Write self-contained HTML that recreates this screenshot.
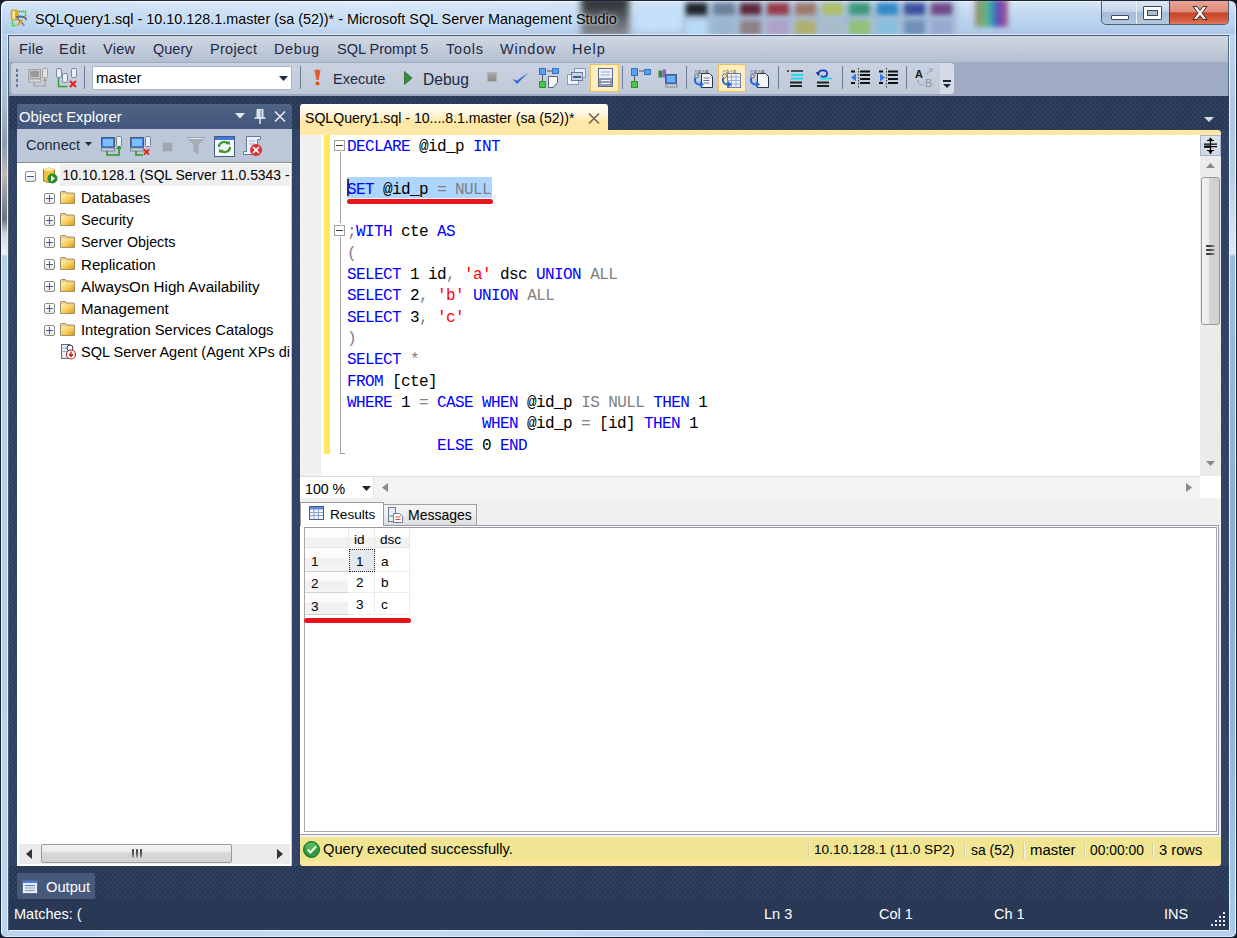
<!DOCTYPE html>
<html><head><meta charset="utf-8"><style>
*{box-sizing:border-box;margin:0;padding:0}
html,body{width:1237px;height:938px;overflow:hidden;background:#141c28}
body{position:relative;font-family:"Liberation Sans",sans-serif;font-size:14.5px;color:#000}
.a{position:absolute}
.t{position:absolute;white-space:pre;line-height:1}
svg{position:absolute;overflow:visible}
#frame{left:0;top:0;width:1237px;height:938px;background:linear-gradient(180deg,rgba(255,255,255,0.45) 0px,rgba(255,255,255,0.15) 14px,rgba(255,255,255,0) 26px,rgba(0,20,60,0.06) 34px,rgba(0,0,0,0) 40px),linear-gradient(90deg,#b9d3ef 0%,#c4dbf3 30%,#b6d0ee 60%,#b4d0ee 100%);border:1px solid #1b2434;border-radius:7px 7px 6px 6px;overflow:hidden;box-shadow:inset 1px 1px 0 rgba(255,255,255,0.8),inset -1px -1px 0 rgba(255,255,255,0.5)}
#glass{left:1px;top:1px;width:1235px;height:34px;overflow:hidden}
#glass .sq{position:absolute;filter:blur(2.5px)}
#client{left:8px;top:35px;width:1222px;height:896px;border-left:1px solid #4a5a70;border-top:1px solid #4a5a70;border-right:1px solid #e8f1fb;border-bottom:1px solid #e8f1fb;background:#293955}
.code{position:absolute;left:347px;font-family:"Liberation Mono",monospace;font-size:16px;letter-spacing:-0.6px;white-space:pre;line-height:1}
.kw{color:#0000ff}.gr{color:#808080}.st{color:#ff0000}
.tb{color:#1e2a44}
.sep{position:absolute;width:1px;background:#6f7c92}
</style></head><body>
<div id="frame" class="a"></div>
<div id="glass" class="a">
<div class="sq" style="left:682px;top:2px;width:274px;height:32px;filter:blur(3px);background:#a6bed8"></div>
<div class="sq" style="left:580px;top:-4px;width:48px;height:40px;filter:blur(3px);background:linear-gradient(180deg,#25282c 0%,#4a4e54 40%,#74787e 75%,#8a9098 100%)"></div>
<div class="sq" style="left:636px;top:4px;width:44px;height:26px;filter:blur(3px);background:#c4e0f8"></div>
<div class="sq" style="left:685px;top:2px;width:21px;height:12px;background:#1e2328"></div>
<div class="sq" style="left:712px;top:2px;width:22px;height:12px;background:#6c8098"></div>
<div class="sq" style="left:739px;top:2px;width:21px;height:12px;background:#5e2838"></div>
<div class="sq" style="left:766px;top:2px;width:22px;height:12px;background:#983848"></div>
<div class="sq" style="left:794px;top:2px;width:21px;height:12px;background:#a07868"></div>
<div class="sq" style="left:821px;top:2px;width:21px;height:12px;background:#b0c068"></div>
<div class="sq" style="left:848px;top:2px;width:21px;height:12px;background:#3e9878"></div>
<div class="sq" style="left:876px;top:2px;width:21px;height:12px;background:#3088c8"></div>
<div class="sq" style="left:903px;top:2px;width:21px;height:12px;background:#3a50a0"></div>
<div class="sq" style="left:930px;top:2px;width:21px;height:12px;background:#704888"></div>
<div class="sq" style="left:685px;top:19px;width:21px;height:15px;background:#badcf8"></div>
<div class="sq" style="left:712px;top:19px;width:22px;height:15px;background:#98b4d0"></div>
<div class="sq" style="left:739px;top:19px;width:21px;height:15px;background:#908088"></div>
<div class="sq" style="left:766px;top:19px;width:22px;height:15px;background:#b0a0c8"></div>
<div class="sq" style="left:794px;top:19px;width:21px;height:15px;background:#b0b070"></div>
<div class="sq" style="left:821px;top:19px;width:21px;height:15px;background:#a8bcc8"></div>
<div class="sq" style="left:848px;top:19px;width:21px;height:15px;background:#90c078"></div>
<div class="sq" style="left:876px;top:19px;width:21px;height:15px;background:#88bee0"></div>
<div class="sq" style="left:903px;top:19px;width:21px;height:15px;background:#7090b8"></div>
<div class="sq" style="left:930px;top:19px;width:21px;height:15px;background:#98a8d0"></div>
<div class="sq" style="left:974px;top:-2px;width:33px;height:28px;background:linear-gradient(90deg,#a08870 0%,#70b070 25%,#40b0a8 45%,#4060c0 65%,#9040a0 82%,#a07090 100%)"></div>
</div>
<svg style="left:8px;top:6px" width="24" height="24" viewBox="0 0 24 24">
<rect x="3.2" y="4" width="6.8" height="9.8" rx="1.2" fill="#e8b020" stroke="#b88a20" stroke-width="0.6"/><rect x="4.5" y="5" width="2.4" height="8" fill="#fae8a0"/>
<g fill="#3cc83c"><circle cx="11.5" cy="5.5" r="0.9"/><circle cx="13.5" cy="5.5" r="0.9"/><circle cx="15.5" cy="5.5" r="0.9"/><circle cx="17.5" cy="5.5" r="0.9"/><circle cx="17.5" cy="7.5" r="0.9"/><circle cx="17.5" cy="9.5" r="0.9"/>
<circle cx="4.5" cy="15.5" r="0.9"/><circle cx="4.5" cy="17.5" r="0.9"/><circle cx="4.5" cy="19.5" r="0.9"/><circle cx="6.5" cy="19.5" r="0.9"/></g>
<path d="M8 11.5Q12 9.5 17 11.5L18.5 14" stroke="#5a6a80" stroke-width="1.8" fill="none"/>
<path d="M10 13l6 6.5" stroke="#2a3a50" stroke-width="1.8" stroke-dasharray="1 1"/>
<path d="M9 19.5l5.5-5.5" stroke="#e0a010" stroke-width="2"/></svg>
<div class="t" style="left:35px;top:12px;font-size:14.4px;text-shadow:0 0 6px rgba(230,240,250,0.9),0 0 3px rgba(230,240,250,0.9)">SQLQuery1.sql - 10.10.128.1.master (sa (52))* - Microsoft SQL Server Management Studio</div>
<div class="a" style="left:1101px;top:1px;width:128px;height:24px;border:1px solid #4f5d73;border-top:none;border-radius:0 0 5px 5px;overflow:hidden;background:linear-gradient(180deg,#dbe7f4 0%,#c5d5e8 45%,#a7bcd6 50%,#b3c7de 100%)">
<div class="a" style="left:34px;top:0;width:1px;height:24px;background:#e8f0f8"></div>
<div class="a" style="left:67px;top:0;width:60px;height:24px;background:linear-gradient(180deg,#eaa597 0%,#e08a78 45%,#c8452b 50%,#d45a3c 80%,#e2876a 100%);border-left:1px solid #8a2a1a"></div></div>
<div class="a" style="left:1111px;top:15px;width:18px;height:5px;background:#fff;border:1px solid #3e4a5c;border-radius:1px"></div>
<div class="a" style="left:1143px;top:6px;width:19px;height:14px;border:1px solid #3e4a5c;border-radius:1px;background:#fff"></div>
<div class="a" style="left:1147px;top:10px;width:11px;height:6px;border:1px solid #3e4a5c;background:#a9bdd6"></div>
<svg style="left:1190px;top:5px" width="20" height="16" viewBox="0 0 20 16"><path d="M3 1.5h4l3 4 3-4h4l-5 6.5 5 6.5h-4l-3-4-3 4H3l5-6.5z" fill="#f2f2f2" stroke="#3e2a2a" stroke-width="1"/></svg>
<div class="a" style="left:1230px;top:34px;width:5px;height:897px;background:linear-gradient(180deg,#bcd6f0 0px,#b0c8e4 70px,#b4cce6 136px,#dde8f4 216px,#dde8f4 220px,#9cbce0 222px,#8fb0d5 480px,#94b5da 700px,#a8c8ec 897px)"></div>
<div class="a" style="left:2px;top:34px;width:5px;height:897px;background:linear-gradient(180deg,#b8d2ee 0px,#a8bcd4 70px,#8c9cb0 110px,#c0b8bc 140px,#6a727c 185px,#d0d8e0 200px,#eef2f6 220px,#b0d0f0 222px,#b4d2f0 500px,#b8d4f0 897px)"></div>
<div class="a" style="left:1235px;top:8px;width:1px;height:924px;background:rgba(240,248,255,0.8)"></div>
<div id="client" class="a"></div>
<div class="a" style="left:7px;top:34px;width:1px;height:897px;background:rgba(240,248,255,0.75)"></div>
<div class="a" style="left:7px;top:34px;width:1223px;height:1px;background:rgba(240,248,255,0.75)"></div>
<div class="a" style="left:9px;top:96px;width:1220px;height:803px;background-image:radial-gradient(circle at 1.25px 1.25px,rgba(70,95,135,0.55) 0,rgba(70,95,135,0) 1.3px),radial-gradient(circle at 3.75px 3.75px,rgba(70,95,135,0.55) 0,rgba(70,95,135,0) 1.3px);background-size:5px 5px"></div>
<div class="a" style="left:9px;top:36px;width:1220px;height:26px;background:linear-gradient(180deg,#d0d7e4 0%,#c3ccdb 50%,#b3bdd0 100%);border-right:1px solid #5a6880"></div>
<div class="t tb" style="left:19px;top:42px;letter-spacing:0.3px">File</div>
<div class="t tb" style="left:59px;top:42px;letter-spacing:0.5px">Edit</div>
<div class="t tb" style="left:103px;top:42px;letter-spacing:0.3px">View</div>
<div class="t tb" style="left:153px;top:42px;letter-spacing:0px">Query</div>
<div class="t tb" style="left:210px;top:42px;letter-spacing:0.3px">Project</div>
<div class="t tb" style="left:274px;top:42px;letter-spacing:0.6px">Debug</div>
<div class="t tb" style="left:337px;top:42px;letter-spacing:0px">SQL Prompt 5</div>
<div class="t tb" style="left:446px;top:42px;letter-spacing:0.8px">Tools</div>
<div class="t tb" style="left:500px;top:42px;letter-spacing:0.8px">Window</div>
<div class="t tb" style="left:572px;top:42px;letter-spacing:1px">Help</div>
<div class="a" style="left:9px;top:62px;width:1220px;height:34px;background:#9eabc2;border-right:1px solid #5a6880"></div>
<div class="a" style="left:11px;top:63px;width:943px;height:31px;border-radius:4px;background:linear-gradient(180deg,#c9d2e0 0%,#bfc9d9 100%)"></div>
<div class="a" style="left:940px;top:63px;width:14px;height:31px;border-radius:0 4px 4px 0;background:#d5dbe7"></div>
<div class="a" style="left:16px;top:69px;width:2px;height:3px;background:#6a7890"></div>
<div class="a" style="left:16px;top:74px;width:2px;height:3px;background:#6a7890"></div>
<div class="a" style="left:16px;top:79px;width:2px;height:3px;background:#6a7890"></div>
<div class="a" style="left:16px;top:84px;width:2px;height:3px;background:#6a7890"></div>
<svg style="left:28px;top:68px" width="21" height="20" viewBox="0 0 21 20">
<rect x="0.5" y="1.5" width="12" height="9" fill="#c8c8c8" stroke="#a0a0a0"/><rect x="2" y="3" width="9" height="6" fill="#9a9a9a"/>
<rect x="0.5" y="11" width="12" height="3" fill="#d8d8d8" stroke="#a8a8a8"/>
<rect x="14.5" y="0.5" width="5" height="9" rx="1" fill="#e0e0e0" stroke="#a0a0a0"/>
<path d="M6 14v4h11v-6" stroke="#a0a0a0" stroke-width="1.2" fill="none"/><path d="M14.5 13l2.5-3 2.5 3z" fill="#a0a0a0"/></svg>
<svg style="left:56px;top:68px" width="22" height="21" viewBox="0 0 22 21">
<rect x="0.5" y="0.5" width="5" height="9" rx="1.5" fill="#eef2f8" stroke="#7a8aa0"/><rect x="6.5" y="5.5" width="5" height="9" rx="1.5" fill="#eef2f8" stroke="#7a8aa0"/>
<rect x="15.5" y="0.5" width="5" height="9" rx="1.5" fill="#eef2f8" stroke="#7a8aa0"/>
<path d="M2.5 10v8.5h9" stroke="#3aa03a" stroke-width="1.6" fill="none"/>
<path d="M14 13l6 6M20 13l-6 6" stroke="#e82020" stroke-width="2"/></svg>
<div class="sep" style="left:84px;top:66px;height:23px"></div>
<div class="a" style="left:92px;top:66px;width:200px;height:24px;background:#fff;border:1px solid #a7b3c7"></div>
<div class="t" style="left:96px;top:71px;font-size:14.9px">master</div>
<svg style="left:279px;top:76px" width="9" height="5" viewBox="0 0 9 5"><path d="M0 0h9L4.5 5z" fill="#1a2a44"/></svg>
<div class="sep" style="left:300px;top:66px;height:23px"></div>
<svg style="left:313px;top:69px" width="9" height="17" viewBox="0 0 9 17">
<path d="M1.5 1.5Q4.5-0.5 7.5 1.5L5.5 11h-2z" fill="#e85a2a"/><circle cx="4.5" cy="14.5" r="2" fill="#e24a20"/></svg>
<div class="t tb" style="left:333px;top:72px">Execute</div>
<svg style="left:404px;top:71px" width="9" height="14" viewBox="0 0 9 14"><path d="M0.5 0.5L8 7L0.5 13.5z" fill="#3a8a3a" stroke="#2a6a2a" stroke-width="0.8"/></svg>
<div class="t tb" style="left:423px;top:72px;font-size:15.6px">Debug</div>
<div class="a" style="left:487px;top:72px;width:10px;height:10px;background:linear-gradient(180deg,#a8a8a8,#8a8a8a);border:1px solid #b4b4b4"></div>
<svg style="left:512px;top:72px" width="17" height="13" viewBox="0 0 17 13"><path d="M0.5 7L5 12L16.5 0.5L5 8.5z" fill="#3d6ad0"/></svg>
<svg style="left:539px;top:68px" width="20" height="20" viewBox="0 0 20 20">
<rect x="0.5" y="0.5" width="6" height="6" fill="#5aa0e8" stroke="#3a70c0"/><rect x="13.5" y="0.5" width="6" height="5" fill="#5aa0e8" stroke="#3a70c0"/>
<path d="M8 3h5M3.5 7v6" stroke="#556" stroke-width="1"/>
<rect x="0.5" y="13.5" width="6" height="6" fill="#48c848" stroke="#2a9a2a"/>
<path d="M9.5 8.5h9v6l-4 5h-5z" fill="#f4f6fa" stroke="#5a6478"/></svg>
<svg style="left:567px;top:68px" width="20" height="19" viewBox="0 0 20 19">
<rect x="7.5" y="0.5" width="11" height="9" fill="#e8eef8" stroke="#8a9ab8"/><rect x="0.5" y="6.5" width="11" height="10" fill="#eef2f8" stroke="#8a9ab8"/>
<rect x="4.5" y="4.5" width="11" height="8" fill="#c4d4ec" stroke="#6a7a98"/><rect x="6" y="8" width="8" height="2" fill="#4a5a78"/></svg>
<div class="a" style="left:590px;top:64px;width:29px;height:28px;background:#ffedbd;border:1px solid #e5c365"></div>
<svg style="left:598px;top:68px" width="15" height="19" viewBox="0 0 15 19">
<rect x="0.5" y="0.5" width="14" height="18" fill="#eef2f8" stroke="#5a6a88"/><path d="M3 4h9M3 7h9" stroke="#9aaacc"/>
<rect x="1" y="10" width="13" height="8" fill="#8a9ab8"/><path d="M3 12.5h9M3 15.5h9" stroke="#f4f6fa"/></svg>
<div class="sep" style="left:622px;top:66px;height:23px"></div>
<svg style="left:631px;top:68px" width="20" height="20" viewBox="0 0 20 20">
<rect x="0.5" y="0.5" width="6" height="7" fill="#5aa0e8" stroke="#3a70c0"/><rect x="13.5" y="1.5" width="6" height="5" fill="#5aa0e8" stroke="#3a70c0"/>
<path d="M8 3h5M3.5 8v6" stroke="#556" stroke-width="1"/><rect x="0.5" y="13.5" width="6" height="6" fill="#48c848" stroke="#2a9a2a"/></svg>
<svg style="left:658px;top:68px" width="20" height="20" viewBox="0 0 20 20">
<rect x="0.5" y="2.5" width="4" height="7" fill="#3a8a3a"/><rect x="4.5" y="1.5" width="4" height="8" fill="#8a6ac0"/><rect x="8.5" y="1.5" width="3" height="8" fill="#d8d8e8"/>
<rect x="7.5" y="6.5" width="11" height="9" fill="#3a7ae0" stroke="#4a5a78"/><rect x="9" y="8" width="8" height="6" fill="#6ab0f8"/><rect x="8" y="16" width="11" height="3" fill="#c8d0dc" stroke="#7a8698"/></svg>
<div class="sep" style="left:686px;top:66px;height:23px"></div>
<svg style="left:693px;top:68px" width="21" height="20" viewBox="0 0 21 20">
<text x="1" y="6" font-family="Liberation Mono" font-size="6" fill="#333">!0!0</text>
<circle cx="3.5" cy="8" r="2" fill="none" stroke="#555" stroke-width="0.8"/><path d="M8.5 5.5h8l3 3v11h-11z" fill="#f4f6fa" stroke="#2a3448"/><path d="M10.5 10h6M10.5 12.5h6M10.5 15h6" stroke="#6a7488"/><path d="M2 10Q1 17 8 16.5" stroke="#2a6ad8" stroke-width="2.2" fill="none"/><path d="M7 13l4 3.5-4 3z" fill="#2a6ad8"/></svg>
<div class="a" style="left:718px;top:64px;width:28px;height:28px;background:#ffedbd;border:1px solid #e5c365"></div>
<svg style="left:721px;top:68px" width="21" height="20" viewBox="0 0 21 20">
<text x="1" y="6" font-family="Liberation Mono" font-size="6" fill="#333">!0!0</text>
<circle cx="3.5" cy="8" r="2" fill="none" stroke="#555" stroke-width="0.8"/><rect x="6.5" y="5.5" width="13" height="14" fill="#f0f4fa" stroke="#6a7a98"/><path d="M6.5 9h13M6.5 12.5h13M6.5 16h13M10.5 5.5v14M15 5.5v14" stroke="#9ab0d0"/><path d="M2 10Q1 17 8 16.5" stroke="#2a6ad8" stroke-width="2.2" fill="none"/><path d="M7 13l4 3.5-4 3z" fill="#2a6ad8"/></svg>
<svg style="left:749px;top:68px" width="21" height="20" viewBox="0 0 21 20">
<text x="1" y="6" font-family="Liberation Mono" font-size="6" fill="#333">!0!0</text>
<circle cx="3.5" cy="8" r="2" fill="none" stroke="#555" stroke-width="0.8"/><path d="M8.5 5.5h8l3 3v11h-11z" fill="#f4f6fa" stroke="#2a3448"/><path d="M2 10Q1 17 8 16.5" stroke="#2a6ad8" stroke-width="2.2" fill="none"/><path d="M7 13l4 3.5-4 3z" fill="#2a6ad8"/></svg>
<div class="sep" style="left:778px;top:66px;height:23px"></div>
<svg style="left:786px;top:69px" width="19" height="19" viewBox="0 0 19 19">
<path d="M1 2h2M5 2h12" stroke="#222" stroke-width="1.6"/><path d="M5 6h12M5 9.5h12" stroke="#20d8e8" stroke-width="1.8"/><path d="M4 13.5h12M4 17h12" stroke="#222" stroke-width="1.8"/></svg>
<svg style="left:815px;top:69px" width="18" height="19" viewBox="0 0 18 19">
<path d="M3 6Q3 1 9 1.5Q13 2 12 6Q10 9 6 7" stroke="#1a3ab8" stroke-width="1.8" fill="none"/><path d="M0.5 3.5l4-1 0 5z" fill="#1a3ab8"/>
<path d="M5 9.5h12" stroke="#20d8e8" stroke-width="1.8"/><path d="M2 13.5h12M2 17h12" stroke="#222" stroke-width="1.8"/></svg>
<div class="sep" style="left:842px;top:66px;height:23px"></div>
<svg style="left:850px;top:68px" width="21" height="20" viewBox="0 0 21 20">
<path d="M8.5 0v20" stroke="#333" stroke-width="1" stroke-dasharray="1.5 1.5"/>
<path d="M1 3.5h4M10 3.5h10M10 7h10M10 11h10M1 15h4M10 15h10" stroke="#111" stroke-width="2"/><path d="M1 9.5l5-4v8z" fill="#3a7ae8"/></svg>
<svg style="left:878px;top:68px" width="21" height="20" viewBox="0 0 21 20">
<path d="M8.5 0v20" stroke="#333" stroke-width="1" stroke-dasharray="1.5 1.5"/>
<path d="M1 3.5h4M10 3.5h10M10 7h10M10 11h10M1 15h4M10 15h10" stroke="#111" stroke-width="2"/><path d="M7 9.5l-5-4v8z" fill="#3a7ae8"/></svg>
<div class="sep" style="left:906px;top:66px;height:23px"></div>
<svg style="left:915px;top:68px" width="20" height="20" viewBox="0 0 20 20">
<text x="0" y="10" font-family="Liberation Sans" font-weight="bold" font-size="11" fill="#222">A</text>
<text x="10" y="19" font-family="Liberation Sans" font-size="11" fill="#8a94a4">B</text>
<path d="M12 6l5-5M14 1h3v3" stroke="#7a8aa8" stroke-width="1" fill="none" stroke-dasharray="1.5 1"/>
<path d="M3 12q0 5 6 5" stroke="#7a8aa8" stroke-width="1" fill="none" stroke-dasharray="1.5 1"/></svg>
<div class="a" style="left:943px;top:80px;width:8px;height:2px;background:#1a2438"></div>
<svg style="left:943px;top:84px" width="8" height="4" viewBox="0 0 8 4"><path d="M0 0h8L4 4z" fill="#1a2438"/></svg>
<div class="a" style="left:9px;top:129px;width:8px;height:737px;background-color:#33466a;background-image:radial-gradient(circle at 1.25px 1.25px,rgba(35,50,78,0.8) 0,rgba(35,50,78,0) 1.3px),radial-gradient(circle at 3.75px 3.75px,rgba(35,50,78,0.8) 0,rgba(35,50,78,0) 1.3px);background-size:5px 5px"></div>
<div class="a" style="left:292px;top:129px;width:8px;height:737px;background-color:#33466a;background-image:radial-gradient(circle at 1.25px 1.25px,rgba(35,50,78,0.8) 0,rgba(35,50,78,0) 1.3px),radial-gradient(circle at 3.75px 3.75px,rgba(35,50,78,0.8) 0,rgba(35,50,78,0) 1.3px);background-size:5px 5px"></div>
<div class="a" style="left:1221px;top:129px;width:8px;height:737px;background-color:#33466a;background-image:radial-gradient(circle at 1.25px 1.25px,rgba(35,50,78,0.8) 0,rgba(35,50,78,0) 1.3px),radial-gradient(circle at 3.75px 3.75px,rgba(35,50,78,0.8) 0,rgba(35,50,78,0) 1.3px);background-size:5px 5px"></div>
<div class="a" style="left:17px;top:104px;width:275px;height:25px;border-radius:3px 3px 0 0;background:linear-gradient(180deg,#506486 0%,#42567b 100%)"></div>
<div class="t" style="left:19px;top:110px;color:#fff;font-size:14.9px">Object Explorer</div>
<svg style="left:235px;top:113px" width="10" height="6" viewBox="0 0 10 6"><path d="M0 0h10L5 5.5z" fill="#e6ebf2"/></svg>
<svg style="left:254px;top:109px" width="12" height="15" viewBox="0 0 12 15">
<path d="M3 0.5h6v8H3z" fill="#dfe5ee" stroke="#dfe5ee"/><path d="M7 1v7" stroke="#8898b4" stroke-width="1.5"/><path d="M0.5 9h11" stroke="#e6ebf2" stroke-width="1.6"/><path d="M6 9v6" stroke="#e6ebf2" stroke-width="1.5"/></svg>
<svg style="left:274px;top:111px" width="12" height="11" viewBox="0 0 12 11"><path d="M1 0.5l10 10M11 0.5l-10 10" stroke="#e6ebf2" stroke-width="1.6"/></svg>
<div class="a" style="left:17px;top:129px;width:275px;height:34px;background:#bcc7d8;border-bottom:1px solid #8a8f9a"></div>
<div class="t tb" style="left:26px;top:138px">Connect</div>
<svg style="left:85px;top:142px" width="7" height="4" viewBox="0 0 7 4"><path d="M0 0h7L3.5 4z" fill="#1a2a44"/></svg>
<svg style="left:101px;top:136px" width="22" height="20" viewBox="0 0 22 20">
<rect x="0.5" y="1.5" width="13" height="10" fill="#3a7ae0" stroke="#4a5a78"/><rect x="2" y="3" width="10" height="7" fill="#7ac0ff"/>
<rect x="0.5" y="12" width="13" height="3" fill="#c8d0dc" stroke="#7a8698"/><rect x="15.5" y="0.5" width="5" height="10" rx="1" fill="#e8eef6" stroke="#7a8698"/>
<path d="M6 15v4h12v-7" stroke="#2a9a2a" stroke-width="1.6" fill="none"/><path d="M15 13l3-3.5 3 3.5z" fill="#2a9a2a"/></svg>
<svg style="left:130px;top:136px" width="21" height="20" viewBox="0 0 21 20">
<rect x="0.5" y="1.5" width="13" height="10" fill="#3a7ae0" stroke="#4a5a78"/><rect x="2" y="3" width="10" height="7" fill="#7ac0ff"/>
<rect x="0.5" y="12" width="13" height="3" fill="#c8d0dc" stroke="#7a8698"/><rect x="15.5" y="0.5" width="5" height="10" rx="1" fill="#e8eef6" stroke="#7a8698"/>
<path d="M6 15v4h7" stroke="#2a9a2a" stroke-width="1.6" fill="none"/><path d="M14 13.5l5 5M19 13.5l-5 5" stroke="#e82020" stroke-width="1.8"/></svg>
<div class="a" style="left:162px;top:142px;width:11px;height:10px;background:#a0a6b0;border:1px solid #b6bcc6"></div>
<svg style="left:187px;top:137px" width="18" height="17" viewBox="0 0 18 17"><path d="M0.5 0.5h17L11 7.5v9l-4-2.5V7.5z" fill="#a8aeb8" stroke="#a0a6b0"/><path d="M2 1.5h14" stroke="#e0e4ea"/></svg>
<svg style="left:214px;top:136px" width="21" height="21" viewBox="0 0 21 21">
<rect x="0.5" y="0.5" width="20" height="20" fill="#f4f8fc" stroke="#4a5a78"/><rect x="1" y="1" width="19" height="3" fill="#3a7ae0"/>
<path d="M5 11a5 5 0 0 1 9-3" stroke="#3a9a2a" stroke-width="2.2" fill="none"/><path d="M16 11a5 5 0 0 1-9 3" stroke="#3a9a2a" stroke-width="2.2" fill="none"/>
<path d="M12 5.5h4v4z" fill="#3a9a2a"/><path d="M9 16.5H5v-4z" fill="#3a9a2a"/></svg>
<svg style="left:242px;top:135px" width="21" height="22" viewBox="0 0 21 22">
<path d="M4.5 1.5h14v3h-3v15H1.5v-3h3z" fill="#eef2f8" stroke="#6a7a98"/><path d="M7 6h6M7 9h6" stroke="#9ab0d8"/>
<circle cx="14" cy="15" r="6" fill="#d8343a"/><path d="M11 12l6 6M17 12l-6 6" stroke="#fff" stroke-width="1.6"/></svg>
<div class="a" style="left:17px;top:163px;width:275px;height:703px;background:#fff;border-right:1px solid #c4c8d0"></div>
<div class="a" style="left:60px;top:164px;width:230px;height:22px;background:#efefef"></div>
<div class="a" style="left:25px;top:171px;width:11px;height:11px;border:1px solid #8e8e8e;border-radius:2px;background:linear-gradient(180deg,#fff 0%,#fafafa 50%,#e4e4e4 100%)"></div><div class="a" style="left:27px;top:176px;width:7px;height:1px;background:#3c5aa0"></div>
<svg style="left:43px;top:167px" width="15" height="17" viewBox="0 0 15 17">
<path d="M0.5 2.5Q6 -0.5 11.5 2.5V14Q6 17 0.5 14z" fill="#f0c040" stroke="#b08020"/><ellipse cx="6" cy="2.5" rx="5" ry="1.8" fill="#fbe7a0"/>
<circle cx="9.5" cy="11.5" r="5" fill="#2a8a2a"/><path d="M8 8.5l4 3-4 3z" fill="#fff"/></svg>
<div class="a" style="left:17px;top:160px;width:273px;height:30px;overflow:hidden"><div class="t" style="left:45.5px;top:9px;font-size:13.9px">10.10.128.1 (SQL Server 11.0.5343 -</div></div>
<div class="a" style="left:44px;top:193px;width:11px;height:11px;border:1px solid #8e8e8e;border-radius:2px;background:linear-gradient(180deg,#fff 0%,#fafafa 50%,#e4e4e4 100%)"></div><div class="a" style="left:46px;top:198px;width:7px;height:1px;background:#3c5aa0"></div><div class="a" style="left:49px;top:195px;width:1px;height:7px;background:#3c5aa0"></div>
<svg style="left:60px;top:191px" width="16" height="13" viewBox="0 0 16 13">
<path d="M0.5 12.5V1.5Q0.5 0.5 1.5 0.5h4l1 1.5h7.5Q14.5 2 14.5 3v9.5z" fill="#eed07a" stroke="#8a7a5a" stroke-width="0.8"/>
<rect x="1" y="3.5" width="13" height="8.6" fill="url(#fg)"/></svg>
<div class="t" style="left:81px;top:191px;font-size:14.5px">Databases</div>
<div class="a" style="left:44px;top:215px;width:11px;height:11px;border:1px solid #8e8e8e;border-radius:2px;background:linear-gradient(180deg,#fff 0%,#fafafa 50%,#e4e4e4 100%)"></div><div class="a" style="left:46px;top:220px;width:7px;height:1px;background:#3c5aa0"></div><div class="a" style="left:49px;top:217px;width:1px;height:7px;background:#3c5aa0"></div>
<svg style="left:60px;top:213px" width="16" height="13" viewBox="0 0 16 13">
<path d="M0.5 12.5V1.5Q0.5 0.5 1.5 0.5h4l1 1.5h7.5Q14.5 2 14.5 3v9.5z" fill="#eed07a" stroke="#8a7a5a" stroke-width="0.8"/>
<rect x="1" y="3.5" width="13" height="8.6" fill="url(#fg)"/></svg>
<div class="t" style="left:81px;top:213px;font-size:14.5px">Security</div>
<div class="a" style="left:44px;top:237px;width:11px;height:11px;border:1px solid #8e8e8e;border-radius:2px;background:linear-gradient(180deg,#fff 0%,#fafafa 50%,#e4e4e4 100%)"></div><div class="a" style="left:46px;top:242px;width:7px;height:1px;background:#3c5aa0"></div><div class="a" style="left:49px;top:239px;width:1px;height:7px;background:#3c5aa0"></div>
<svg style="left:60px;top:235px" width="16" height="13" viewBox="0 0 16 13">
<path d="M0.5 12.5V1.5Q0.5 0.5 1.5 0.5h4l1 1.5h7.5Q14.5 2 14.5 3v9.5z" fill="#eed07a" stroke="#8a7a5a" stroke-width="0.8"/>
<rect x="1" y="3.5" width="13" height="8.6" fill="url(#fg)"/></svg>
<div class="t" style="left:81px;top:235px;font-size:14.28px">Server Objects</div>
<div class="a" style="left:44px;top:259px;width:11px;height:11px;border:1px solid #8e8e8e;border-radius:2px;background:linear-gradient(180deg,#fff 0%,#fafafa 50%,#e4e4e4 100%)"></div><div class="a" style="left:46px;top:264px;width:7px;height:1px;background:#3c5aa0"></div><div class="a" style="left:49px;top:261px;width:1px;height:7px;background:#3c5aa0"></div>
<svg style="left:60px;top:257px" width="16" height="13" viewBox="0 0 16 13">
<path d="M0.5 12.5V1.5Q0.5 0.5 1.5 0.5h4l1 1.5h7.5Q14.5 2 14.5 3v9.5z" fill="#eed07a" stroke="#8a7a5a" stroke-width="0.8"/>
<rect x="1" y="3.5" width="13" height="8.6" fill="url(#fg)"/></svg>
<div class="t" style="left:81px;top:257px;font-size:15.1px">Replication</div>
<div class="a" style="left:44px;top:281px;width:11px;height:11px;border:1px solid #8e8e8e;border-radius:2px;background:linear-gradient(180deg,#fff 0%,#fafafa 50%,#e4e4e4 100%)"></div><div class="a" style="left:46px;top:286px;width:7px;height:1px;background:#3c5aa0"></div><div class="a" style="left:49px;top:283px;width:1px;height:7px;background:#3c5aa0"></div>
<svg style="left:60px;top:279px" width="16" height="13" viewBox="0 0 16 13">
<path d="M0.5 12.5V1.5Q0.5 0.5 1.5 0.5h4l1 1.5h7.5Q14.5 2 14.5 3v9.5z" fill="#eed07a" stroke="#8a7a5a" stroke-width="0.8"/>
<rect x="1" y="3.5" width="13" height="8.6" fill="url(#fg)"/></svg>
<div class="t" style="left:81px;top:279px;font-size:15.2px">AlwaysOn High Availability</div>
<div class="a" style="left:44px;top:303px;width:11px;height:11px;border:1px solid #8e8e8e;border-radius:2px;background:linear-gradient(180deg,#fff 0%,#fafafa 50%,#e4e4e4 100%)"></div><div class="a" style="left:46px;top:308px;width:7px;height:1px;background:#3c5aa0"></div><div class="a" style="left:49px;top:305px;width:1px;height:7px;background:#3c5aa0"></div>
<svg style="left:60px;top:301px" width="16" height="13" viewBox="0 0 16 13">
<path d="M0.5 12.5V1.5Q0.5 0.5 1.5 0.5h4l1 1.5h7.5Q14.5 2 14.5 3v9.5z" fill="#eed07a" stroke="#8a7a5a" stroke-width="0.8"/>
<rect x="1" y="3.5" width="13" height="8.6" fill="url(#fg)"/></svg>
<div class="t" style="left:81px;top:301px;font-size:15.04px">Management</div>
<div class="a" style="left:44px;top:325px;width:11px;height:11px;border:1px solid #8e8e8e;border-radius:2px;background:linear-gradient(180deg,#fff 0%,#fafafa 50%,#e4e4e4 100%)"></div><div class="a" style="left:46px;top:330px;width:7px;height:1px;background:#3c5aa0"></div><div class="a" style="left:49px;top:327px;width:1px;height:7px;background:#3c5aa0"></div>
<svg style="left:60px;top:323px" width="16" height="13" viewBox="0 0 16 13">
<path d="M0.5 12.5V1.5Q0.5 0.5 1.5 0.5h4l1 1.5h7.5Q14.5 2 14.5 3v9.5z" fill="#eed07a" stroke="#8a7a5a" stroke-width="0.8"/>
<rect x="1" y="3.5" width="13" height="8.6" fill="url(#fg)"/></svg>
<div class="t" style="left:81px;top:323px;font-size:14.74px">Integration Services Catalogs</div>
<svg width="0" height="0" style="left:0;top:0"><defs><linearGradient id="fg" x1="0" y1="0" x2="1" y2="1"><stop offset="0" stop-color="#fff2b8"/><stop offset="0.6" stop-color="#f4c850"/><stop offset="1" stop-color="#d89a10"/></linearGradient></defs></svg>
<svg style="left:61px;top:344px" width="16" height="16" viewBox="0 0 16 16">
<rect x="0.5" y="0.5" width="8" height="14" fill="#e8eef8" stroke="#5a6a88"/><path d="M1.5 4h6M1.5 7.5h6" stroke="#9aaac8"/>
<circle cx="9" cy="4" r="3" fill="#fff" stroke="#333"/><circle cx="10" cy="10.5" r="4.5" fill="#fff" stroke="#a83030" stroke-width="1.2"/>
<path d="M10 7.5v4.5M8 10l2 2.5 2-2.5" stroke="#c02020" stroke-width="1.4" fill="none"/></svg>
<div class="t" style="left:81px;top:345px">SQL Server Agent (Agent XPs di</div>
<div class="a" style="left:19px;top:844px;width:271px;height:20px;background:#eaeaea"></div>
<svg style="left:26px;top:849px" width="6" height="10" viewBox="0 0 6 10"><path d="M6 0v10L0 5z" fill="#333"/></svg>
<svg style="left:277px;top:849px" width="6" height="10" viewBox="0 0 6 10"><path d="M0 0v10L6 5z" fill="#333"/></svg>
<div class="a" style="left:41px;top:844px;width:191px;height:19px;border:1px solid #9a9a9a;border-radius:2px;background:linear-gradient(180deg,#f2f2f2 0%,#ececec 40%,#d8d8d8 45%,#d2d2d2 100%)"></div>
<div class="a" style="left:132px;top:849px;width:2px;height:9px;border-radius:1px;background:linear-gradient(180deg,#333,#666 60%,#aaa)"></div>
<div class="a" style="left:136px;top:849px;width:2px;height:9px;border-radius:1px;background:linear-gradient(180deg,#333,#666 60%,#aaa)"></div>
<div class="a" style="left:140px;top:849px;width:2px;height:9px;border-radius:1px;background:linear-gradient(180deg,#333,#666 60%,#aaa)"></div>
<div class="a" style="left:300px;top:104px;width:308px;height:31px;border-radius:3px 3px 0 0;background:linear-gradient(180deg,#fffdf6 0%,#fff5dc 35%,#ffefc0 45%,#ffe8a6 55%,#ffe8a6 100%)"></div>
<div class="t" style="left:305px;top:111px;font-size:14.1px">SQLQuery1.sql - 10....8.1.master (sa (52))*</div>
<svg style="left:588px;top:113px" width="12" height="11" viewBox="0 0 12 11"><path d="M1 0.5l10 10M11 0.5l-10 10" stroke="#6e6650" stroke-width="1.6"/></svg>
<div class="a" style="left:300px;top:130px;width:921px;height:5px;border-radius:0 3px 0 0;background:#ffe8a6"></div>
<svg style="left:1204px;top:117px" width="10" height="5" viewBox="0 0 10 5"><path d="M0 0h10L5 5z" fill="#d8dce4"/></svg>
<div class="a" style="left:300px;top:135px;width:921px;height:341px;background:#fff"></div>
<div class="a" style="left:300px;top:135px;width:21px;height:341px;background:#f0f0f0"></div>
<div class="a" style="left:324px;top:135px;width:6px;height:319px;background:#ffe860"></div>
<div class="a" style="left:334px;top:140px;width:11px;height:11px;border:1px solid #a0a0a0;background:#fff"></div><div class="a" style="left:336px;top:145px;width:7px;height:1px;background:#404040"></div>
<div class="a" style="left:340px;top:152px;width:1px;height:71px;background:#a0a0a0"></div>
<div class="a" style="left:334px;top:225px;width:11px;height:11px;border:1px solid #a0a0a0;background:#fff"></div><div class="a" style="left:336px;top:230px;width:7px;height:1px;background:#404040"></div>
<div class="a" style="left:340px;top:237px;width:1px;height:217px;background:#a0a0a0"></div>
<div class="a" style="left:340px;top:453px;width:5px;height:1px;background:#a0a0a0"></div>
<div class="a" style="left:347px;top:177px;width:145px;height:21px;background:#add6ff"></div>
<div class="a" style="left:347px;top:179px;width:2px;height:17px;background:#333"></div>
<div class="code" style="top:139.00px"><span class="kw">DECLARE</span> @id_p <span class="kw">INT</span></div>
<div class="code" style="top:181.67px"><span class="kw">SET</span> @id_p <span class="gr">=</span> <span class="gr">NULL</span></div>
<div class="code" style="top:224.33px"><span class="gr">;</span><span class="kw">WITH</span> cte <span class="kw">AS</span></div>
<div class="code" style="top:245.67px"><span class="gr">(</span></div>
<div class="code" style="top:267.00px"><span class="kw">SELECT</span> 1 id<span class="gr">,</span> <span class="st">'a'</span> dsc <span class="kw">UNION</span> <span class="gr">ALL</span></div>
<div class="code" style="top:288.33px"><span class="kw">SELECT</span> 2<span class="gr">,</span> <span class="st">'b'</span> <span class="kw">UNION</span> <span class="gr">ALL</span></div>
<div class="code" style="top:309.67px"><span class="kw">SELECT</span> 3<span class="gr">,</span> <span class="st">'c'</span></div>
<div class="code" style="top:331.00px"><span class="gr">)</span></div>
<div class="code" style="top:352.33px"><span class="kw">SELECT</span> <span class="gr">*</span></div>
<div class="code" style="top:373.67px"><span class="kw">FROM</span> [cte]</div>
<div class="code" style="top:395.00px"><span class="kw">WHERE</span> 1 <span class="gr">=</span> <span class="kw">CASE</span> <span class="kw">WHEN</span> @id_p <span class="gr">IS</span> <span class="gr">NULL</span> <span class="kw">THEN</span> 1</div>
<div class="code" style="top:416.33px">               <span class="kw">WHEN</span> @id_p <span class="gr">=</span> [id] <span class="kw">THEN</span> 1</div>
<div class="code" style="top:437.67px">          <span class="kw">ELSE</span> 0 <span class="kw">END</span></div>
<div class="a" style="left:347px;top:199px;width:146px;height:5px;border-radius:3px;background:#e8141c"></div>
<div class="a" style="left:1200px;top:135px;width:21px;height:341px;background:#ebebeb"></div>
<div class="a" style="left:1200px;top:135px;width:21px;height:21px;background:linear-gradient(180deg,#dde3ec,#d0d8e4);border:1px solid #a8b4c8"></div>
<svg style="left:1203px;top:137px" width="15" height="18" viewBox="0 0 15 18">
<path d="M7.5 1v16" stroke="#000" stroke-width="1.3"/><path d="M4 3.5h7M4 13.5h7" stroke="#000" stroke-width="1.2"/>
<path d="M1 7.2h13M1 9.6h13" stroke="#000" stroke-width="1.3"/><path d="M1 9.6h6" stroke="#000" stroke-width="2.2"/>
<path d="M5 3.5l2.5-3 2.5 3z" fill="#000"/><path d="M5 13.5l2.5 3.5 2.5-3.5z" fill="#000"/></svg>
<svg style="left:1206px;top:163px" width="9" height="5" viewBox="0 0 9 5"><path d="M0 5L4.5 0 9 5z" fill="#8a8a8a"/></svg>
<div class="a" style="left:1201px;top:177px;width:19px;height:148px;border:1px solid #9a9a9a;border-radius:3px;background:linear-gradient(90deg,#f2f2f2 0%,#ececec 40%,#d4d4d4 45%,#d0d0d0 100%)"></div>
<div class="a" style="left:1206px;top:245px;width:9px;height:2px;border-radius:1px;background:linear-gradient(90deg,#222,#555 60%,#aaa)"></div>
<div class="a" style="left:1206px;top:249px;width:9px;height:2px;border-radius:1px;background:linear-gradient(90deg,#222,#555 60%,#aaa)"></div>
<div class="a" style="left:1206px;top:253px;width:9px;height:2px;border-radius:1px;background:linear-gradient(90deg,#222,#555 60%,#aaa)"></div>
<svg style="left:1206px;top:461px" width="9" height="5" viewBox="0 0 9 5"><path d="M0 0L4.5 5 9 0z" fill="#8a8a8a"/></svg>
<div class="a" style="left:300px;top:476px;width:900px;height:22px;background:#f3f3f3;border-top:1px solid #dcdcdc"></div>
<div class="a" style="left:1200px;top:476px;width:21px;height:22px;background:#fff"></div>
<div class="a" style="left:300px;top:477px;width:74px;height:21px;background:#fff;border-right:1px solid #e4e4e4"></div>
<div class="t" style="left:305px;top:482px;font-size:14.2px">100 %</div>
<svg style="left:362px;top:486px" width="9" height="5" viewBox="0 0 9 5"><path d="M0 0h9L4.5 5z" fill="#1a2438"/></svg>
<svg style="left:382px;top:483px" width="6" height="9" viewBox="0 0 6 9"><path d="M6 0v9L0 4.5z" fill="#8a8a8a"/></svg>
<svg style="left:1186px;top:483px" width="6" height="9" viewBox="0 0 6 9"><path d="M0 0v9L6 4.5z" fill="#8a8a8a"/></svg>
<div class="a" style="left:300px;top:498px;width:921px;height:339px;background:#f0f0f0"></div>
<div class="a" style="left:383px;top:504px;width:94px;height:22px;border:1px solid #a0a0a0;border-bottom:none;background:linear-gradient(180deg,#f6f6f6 0%,#ececec 50%,#dcdcdc 100%)"></div>
<div class="a" style="left:300px;top:525px;width:919px;height:1px;background:#9a9aa4"></div>
<div class="a" style="left:300px;top:502px;width:84px;height:24px;border:1px solid #9a9aa4;border-bottom:none;background:#fff"></div>
<svg style="left:309px;top:506px" width="15" height="14" viewBox="0 0 15 14">
<rect x="0.5" y="0.5" width="14" height="13" fill="#f4f8fc" stroke="#4a5a78"/><rect x="1" y="1" width="13" height="2.5" fill="#5a8ae0"/>
<path d="M1 6.5h13M1 9.5h13M5 3.5v10M9.5 3.5v10" stroke="#8aa0c8"/></svg>
<div class="t" style="left:330px;top:508px;font-size:13.6px">Results</div>
<svg style="left:388px;top:507px" width="15" height="16" viewBox="0 0 15 16">
<rect x="0.5" y="0.5" width="7" height="14" fill="#e8eef8" stroke="#6a7a98"/><path d="M5.5 6.5h6l3 3v6h-9z" fill="#fff" stroke="#6a7a98"/>
<path d="M7.5 10h5M7.5 12.5h5" stroke="#e04040"/><path d="M1.5 9h4" stroke="#40a040"/></svg>
<div class="t" style="left:408px;top:508px;font-size:14px">Messages</div>
<div class="a" style="left:300px;top:526px;width:919px;height:309px;background:#fff;border-right:1px solid #9a9aa4;border-bottom:1px solid #9a9aa4"></div>
<div class="a" style="left:304px;top:527px;width:913px;height:305px;border:1px solid #a8a8b0;border-top:1px solid #9a9aa4"></div>
<div class="a" style="left:305px;top:528px;width:105px;height:20px;background:linear-gradient(180deg,#fff 0%,#fbfbfb 50%,#f0f0f0 55%,#f4f4f4 100%);border-bottom:1px solid #e6e6e6"></div>
<div class="a" style="left:348px;top:528px;width:1px;height:20px;background:#e8e8e8"></div>
<div class="a" style="left:374px;top:528px;width:1px;height:20px;background:#e8e8e8"></div>
<div class="a" style="left:409px;top:528px;width:1px;height:20px;background:#e8e8e8"></div>
<div class="t" style="left:354px;top:533px;font-size:13.6px">id</div>
<div class="t" style="left:380px;top:533px;font-size:13.6px">dsc</div>
<div class="a" style="left:349px;top:549px;width:26px;height:23px;background:#e4e9ef"></div>
<div class="a" style="left:305px;top:548px;width:43px;height:24px;background:linear-gradient(180deg,#fff 0%,#fafafa 45%,#efefef 50%,#f3f3f3 90%);border-bottom:1px solid #d0d0d0"></div>
<div class="a" style="left:348px;top:571px;width:62px;height:1px;background:#ececec"></div>
<div class="a" style="left:374px;top:548px;width:1px;height:24px;background:#ececec"></div>
<div class="a" style="left:409px;top:548px;width:1px;height:24px;background:#ececec"></div>
<div class="t" style="left:311px;top:555px;font-size:13.6px">1</div>
<div class="t" style="left:356px;top:555px;font-size:13.6px">1</div>
<div class="t" style="left:381px;top:555px;font-size:13.6px">a</div>
<div class="a" style="left:305px;top:572px;width:43px;height:21px;background:linear-gradient(180deg,#fff 0%,#fafafa 45%,#efefef 50%,#f3f3f3 90%);border-bottom:1px solid #d0d0d0"></div>
<div class="a" style="left:348px;top:592px;width:62px;height:1px;background:#ececec"></div>
<div class="a" style="left:374px;top:572px;width:1px;height:21px;background:#ececec"></div>
<div class="a" style="left:409px;top:572px;width:1px;height:21px;background:#ececec"></div>
<div class="t" style="left:311px;top:577px;font-size:13.6px">2</div>
<div class="t" style="left:356px;top:576px;font-size:13.6px">2</div>
<div class="t" style="left:381px;top:576px;font-size:13.6px">b</div>
<div class="a" style="left:305px;top:593px;width:43px;height:22px;background:linear-gradient(180deg,#fff 0%,#fafafa 45%,#efefef 50%,#f3f3f3 90%);border-bottom:1px solid #d0d0d0"></div>
<div class="a" style="left:348px;top:614px;width:62px;height:1px;background:#ececec"></div>
<div class="a" style="left:374px;top:593px;width:1px;height:22px;background:#ececec"></div>
<div class="a" style="left:409px;top:593px;width:1px;height:22px;background:#ececec"></div>
<div class="t" style="left:311px;top:600px;font-size:13.6px">3</div>
<div class="t" style="left:356px;top:598px;font-size:13.6px">3</div>
<div class="t" style="left:381px;top:598px;font-size:13.6px">c</div>
<div class="a" style="left:349px;top:549px;width:26px;height:23px;border:1px dotted #222"></div>
<div class="a" style="left:304px;top:618px;width:107px;height:5px;border-radius:3px;background:#e8141c"></div>
<div class="a" style="left:300px;top:837px;width:921px;height:29px;border-radius:0 0 3px 3px;background:linear-gradient(180deg,#efe592 0%,#efe592 83%,#fde6a0 84%,#fde6a0 100%)"></div>
<svg style="left:303px;top:841px" width="17" height="17" viewBox="0 0 17 17">
<circle cx="8.5" cy="8.5" r="8" fill="#2e9a3a" stroke="#1e6a2a"/><ellipse cx="8.5" cy="5.5" rx="6" ry="4" fill="#6cc86c" opacity="0.6"/>
<path d="M4.5 8.5l3 3 5.5-6" stroke="#fff" stroke-width="2" fill="none"/></svg>
<div class="t" style="left:323px;top:842px;font-size:14.7px">Query executed successfully.</div>
<div class="a" style="left:808px;top:842px;width:2px;height:17px;background:linear-gradient(90deg,#c8c290,#fff)"></div>
<div class="a" style="left:964px;top:842px;width:2px;height:17px;background:linear-gradient(90deg,#c8c290,#fff)"></div>
<div class="a" style="left:1023px;top:842px;width:2px;height:17px;background:linear-gradient(90deg,#c8c290,#fff)"></div>
<div class="a" style="left:1084px;top:842px;width:2px;height:17px;background:linear-gradient(90deg,#c8c290,#fff)"></div>
<div class="a" style="left:1152px;top:842px;width:2px;height:17px;background:linear-gradient(90deg,#c8c290,#fff)"></div>
<div class="t" style="left:814px;top:843px;font-size:13.7px">10.10.128.1 (11.0 SP2)</div>
<div class="t" style="left:971px;top:844px;font-size:13.9px">sa (52)</div>
<div class="t" style="left:1030px;top:843px;font-size:14.9px">master</div>
<div class="t" style="left:1090px;top:844px;font-size:13.85px">00:00:00</div>
<div class="t" style="left:1159px;top:843px;font-size:14.7px">3 rows</div>
<div class="a" style="left:17px;top:873px;width:78px;height:26px;border-radius:2px;background:#46597b"></div>
<svg style="left:22px;top:880px" width="16" height="14" viewBox="0 0 16 14">
<rect x="0.5" y="0.5" width="15" height="13" fill="#e8eef8" stroke="#5a6a88"/><rect x="1" y="1" width="14" height="2" fill="#4a7ae0"/>
<path d="M3 5.5h10M3 8h10M3 10.5h10" stroke="#8a9abc"/><path d="M3 5.5h10" stroke="#4a7ae0"/></svg>
<div class="t" style="left:46px;top:880px;color:#fff;font-size:14.7px">Output</div>
<div class="t" style="left:14px;top:907px;color:#fff;font-size:14.5px">Matches: (</div>
<div class="t" style="left:764px;top:907px;color:#fff;font-size:14.5px">Ln 3</div>
<div class="t" style="left:879px;top:907px;color:#fff;font-size:14.5px">Col 1</div>
<div class="t" style="left:994px;top:907px;color:#fff;font-size:14.5px">Ch 1</div>
<div class="t" style="left:1164px;top:907px;color:#fff;font-size:14.5px">INS</div>
<div class="a" style="left:1223px;top:912px;width:2px;height:2px;background:#e8ecf4"></div>
<div class="a" style="left:1219px;top:916px;width:2px;height:2px;background:#e8ecf4"></div>
<div class="a" style="left:1223px;top:916px;width:2px;height:2px;background:#e8ecf4"></div>
<div class="a" style="left:1215px;top:920px;width:2px;height:2px;background:#e8ecf4"></div>
<div class="a" style="left:1219px;top:920px;width:2px;height:2px;background:#e8ecf4"></div>
<div class="a" style="left:1223px;top:920px;width:2px;height:2px;background:#e8ecf4"></div>
<div class="a" style="left:1211px;top:924px;width:2px;height:2px;background:#e8ecf4"></div>
<div class="a" style="left:1215px;top:924px;width:2px;height:2px;background:#e8ecf4"></div>
<div class="a" style="left:1219px;top:924px;width:2px;height:2px;background:#e8ecf4"></div>
<div class="a" style="left:1223px;top:924px;width:2px;height:2px;background:#e8ecf4"></div>
</body></html>
